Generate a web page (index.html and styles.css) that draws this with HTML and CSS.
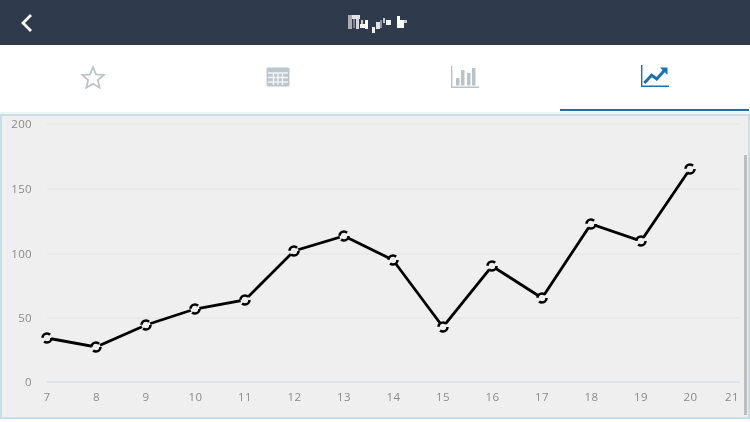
FILE: index.html
```html
<!DOCTYPE html>
<html lang="en">
<head>
    <meta charset="UTF-8">
    <meta name="viewport" content="width=device-width, initial-scale=1.0">
    <title>Chart</title>
    <link rel="stylesheet" href="styles.css">
</head>
<body>
    <header class="topbar">
        <svg class="back" width="14" height="24" viewBox="0 0 14 24"><path d="M11 4 L3 12 L11 20" fill="none" stroke="#fff" stroke-width="2.8"/></svg>
        <!-- the title is pixelated in the screenshot -->
        <svg class="title" width="60" height="20" viewBox="348 14 60 20" role="img" aria-label="Pixelated title">
            <rect x="348" y="15" width="4" height="14" fill="#a9adb4"/>
            <rect x="352" y="15" width="8" height="4" fill="#e4e5e7"/>
            <rect x="353" y="19" width="2" height="9" fill="#7c8490"/>
            <rect x="356" y="19" width="3" height="10" fill="#d5d7da"/>
            <rect x="360" y="24" width="7" height="4" fill="#f4f4f4"/>
            <rect x="361" y="20" width="2" height="4" fill="#c4c7cb"/>
            <rect x="365" y="20" width="3" height="9" fill="#fff"/>
            <rect x="372" y="27" width="3" height="6" fill="#eee"/>
            <rect x="376" y="22" width="4" height="7" fill="#e2e3e5"/>
            <rect x="380" y="20" width="2" height="8" fill="#8c929b"/>
            <rect x="383" y="18" width="2" height="5" fill="#c4c7cb"/>
            <rect x="386" y="20" width="5" height="5" fill="#f2f2f2"/>
            <rect x="397" y="16" width="3" height="12" fill="#fff"/>
            <rect x="400" y="20" width="4" height="8" fill="#fff"/>
            <rect x="404" y="20" width="3" height="3" fill="#c4c7cb"/>
        </svg>
    </header>

    <nav class="tabs">
        <div class="tab">
            <svg width="26" height="25" viewBox="0 0 24 23"><path d="M12 2 L14.8 8.6 L22 9.2 L16.5 13.9 L18.2 21 L12 17.3 L5.8 21 L7.5 13.9 L2 9.2 L9.2 8.6 Z" fill="none" stroke="#b9c4ca" stroke-width="1.6"/></svg>
        </div>
        <div class="tab">
            <svg width="24" height="20" viewBox="0 0 24 20">
                <rect x="0.5" y="0.5" width="23" height="19" rx="1.5" fill="#bcc7cd"/>
                <path d="M2 6 H22 M2 10.5 H22 M2 15 H22 M7.5 6 V18 M12 6 V18 M16.5 6 V18" stroke="#f2f4f5" stroke-width="1.4"/>
            </svg>
        </div>
        <div class="tab">
            <svg width="28" height="22" viewBox="0 0 28 22">
                <path d="M0.7 0 V21.2 H28" fill="none" stroke="#b9c4ca" stroke-width="1.4"/>
                <rect x="5" y="12" width="3.5" height="7.5" fill="#b9c4ca"/>
                <rect x="10" y="4" width="3.5" height="15.5" fill="#b9c4ca"/>
                <rect x="16" y="7" width="3.5" height="12.5" fill="#b9c4ca"/>
                <rect x="21" y="2" width="3.5" height="17.5" fill="#b9c4ca"/>
            </svg>
        </div>
        <div class="tab active">
            <svg width="28" height="22" viewBox="0 0 28 22">
                <path d="M0.7 0 V21.2 H28" fill="none" stroke="#1a72b5" stroke-width="1.4"/>
                <path d="M3.3 18 L10.7 10.3 L15.7 14 L24 4.7" fill="none" stroke="#1a72b5" stroke-width="3"/>
                <path d="M19 2.5 H26.5 V10 Z" fill="#1a72b5"/>
            </svg>
        </div>
    </nav>

    <main class="panel">
        <svg class="chart" width="746" height="301" viewBox="2 116 746 301">
            <g class="grid">
                <line x1="47" y1="124" x2="740" y2="124"/>
                <line x1="47" y1="189" x2="740" y2="189"/>
                <line x1="47" y1="254" x2="740" y2="254"/>
                <line x1="47" y1="318" x2="740" y2="318"/>
                <line class="base" x1="47" y1="382" x2="740" y2="382"/>
            </g>
            <g class="y-labels">
                <text x="32" y="128">200</text>
                <text x="32" y="193">150</text>
                <text x="32" y="258">100</text>
                <text x="32" y="322">50</text>
                <text x="32" y="386">0</text>
            </g>
            <g class="x-labels">
                <text x="47" y="401">7</text>
                <text x="96.5" y="401">8</text>
                <text x="146" y="401">9</text>
                <text x="195.5" y="401">10</text>
                <text x="245" y="401">11</text>
                <text x="294.5" y="401">12</text>
                <text x="344" y="401">13</text>
                <text x="393.5" y="401">14</text>
                <text x="443" y="401">15</text>
                <text x="492.5" y="401">16</text>
                <text x="542" y="401">17</text>
                <text x="591.5" y="401">18</text>
                <text x="641" y="401">19</text>
                <text x="690.5" y="401">20</text>
                <text x="732" y="401">21</text>
            </g>
            <polyline class="line" points="47,338 96,347 146,325 195,309 245,300 294,251 344,236 393,260 443,327 492,266 542,298 591,224 641,241 690,169"/>
            <g class="dots">
                <circle cx="47" cy="338" r="4.5"/>
                <circle cx="96" cy="347" r="4.5"/>
                <circle cx="146" cy="325" r="4.5"/>
                <circle cx="195" cy="309" r="4.5"/>
                <circle cx="245" cy="300" r="4.5"/>
                <circle cx="294" cy="251" r="4.5"/>
                <circle cx="344" cy="236" r="4.5"/>
                <circle cx="393" cy="260" r="4.5"/>
                <circle cx="443" cy="327" r="4.5"/>
                <circle cx="492" cy="266" r="4.5"/>
                <circle cx="542" cy="298" r="4.5"/>
                <circle cx="591" cy="224" r="4.5"/>
                <circle cx="641" cy="241" r="4.5"/>
                <circle cx="690" cy="169" r="4.5"/>
            </g>
        </svg>
        <div class="scrollbar"></div>
    </main>
</body>
</html>
```

FILE: styles.css
```css
:root {
    --navy: #2f3b4c;
    --blue: #1f6fa8;
    --panel-border: #c6dfe9;
}
body, html {
    margin: 0;
    height: 100%;
    overflow: hidden;
    background-color: #fff;
    font-family: 'Open Sans', Arial, sans-serif;
}
.topbar {
    position: relative;
    height: 45px;
    display: flex;
    align-items: center;
    justify-content: center;
    background-color: var(--navy);
}
.back {
    position: absolute;
    left: 20px;
    top: 11px;
}
.title {
    margin-top: 3px;
    margin-left: 6px;
    filter: blur(0.6px);
}
.tabs {
    display: grid;
    grid-template-columns: 186px 184px 190px 190px;
    grid-template-rows: 66px;
    height: 69px;
    box-sizing: border-box;
    border-bottom: 2px solid #eef5f7;
}
.tab {
    display: flex;
    align-items: center;
    justify-content: center;
    box-sizing: border-box;
    padding-bottom: 2px;
}
.tab.active {
    border-bottom: 2px solid var(--blue);
    margin-right: 1px;
}
.panel {
    position: relative;
    height: 305px;
    box-sizing: border-box;
    border: 2px solid var(--panel-border);
    background-color: #efefef;
}
.chart {
    display: block;
}
.chart text {
    font-size: 11.5px;
    letter-spacing: 0.3px;
    fill: #8a8a8a;
}
.y-labels, .x-labels {
    opacity: 0.99;
}
.y-labels text {
    text-anchor: end;
}
.x-labels text {
    text-anchor: middle;
}
.grid line {
    stroke: #e4e4e6;
    stroke-width: 1;
}
.grid .base {
    stroke: #cdd6e6;
}
.line {
    fill: none;
    stroke: #000;
    stroke-width: 2.8;
}
.dots circle {
    fill: #efefef;
    stroke: #000;
    stroke-width: 2.6;
    stroke-dasharray: 10 4;
}
.scrollbar {
    position: absolute;
    right: 1px;
    top: 39px;
    bottom: 2px;
    width: 3px;
    background-color: #bdbdbd;
}
```
